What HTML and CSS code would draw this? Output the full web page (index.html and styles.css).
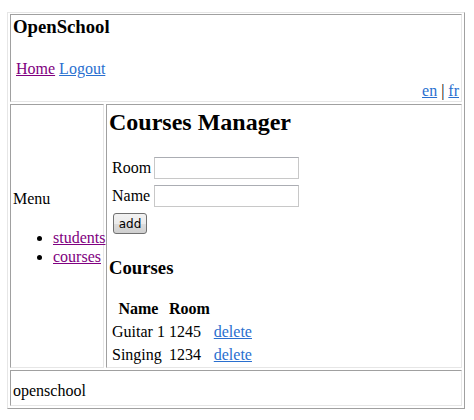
FILE: index.html
```html
<!DOCTYPE html>
<html>
<head>
<meta charset="utf-8">
<title>OpenSchool</title>
<link rel="stylesheet" href="styles.css">
</head>
<body>
<div class="frame">
  <div class="cell header">
    <h3 class="brand">OpenSchool</h3>
    <div class="nav"><a href="#" class="visited">Home</a> <a href="#">Logout</a></div>
    <div class="lang"><a href="#">en</a> | <a href="#">fr</a></div>
  </div>
  <div class="cell menu">
    <div class="menu-inner">
      <div>Menu</div>
      <ul class="menu-list">
        <li><a href="#" class="visited">students</a></li>
        <li><a href="#" class="visited">courses</a></li>
      </ul>
    </div>
  </div>
  <div class="cell main">
    <h2 class="title">Courses Manager</h2>
    <form class="course-form">
      <label class="lbl">Room</label><input class="field" type="text">
      <label class="lbl">Name</label><input class="field" type="text">
      <button type="button" class="btn">add</button>
    </form>
    <h3 class="subtitle">Courses</h3>
    <table class="courses">
      <tr><th>Name</th><th>Room</th><th></th></tr>
      <tr><td>Guitar 1</td><td>1245</td><td class="act"><a href="#">delete</a></td></tr>
      <tr><td>Singing</td><td>1234</td><td class="act"><a href="#">delete</a></td></tr>
    </table>
  </div>
  <div class="cell footer">openschool</div>
</div>
</body>
</html>
```
FILE: styles.css
```css
html, body {
  background: #ffffff;
}
body {
  margin: 12px 9px 0 7px;
  font-family: "Liberation Serif", "Times New Roman", serif;
  font-size: 16px;
  color: #000;
}
a {
  color: #2a6fcf;
  text-decoration: underline;
}
a.visited {
  color: #800080;
}
.frame {
  box-sizing: border-box;
  width: 458px;
  display: grid;
  grid-template-columns: 94px 1fr;
  gap: 2px;
  padding: 1px 2px 2px 2px;
  border: 1px solid;
  border-color: #e6e6e6 #a0a0a0 #a0a0a0 #e6e6e6;
}
.cell {
  border: 1px solid;
  border-color: #a0a0a0 #e6e6e6 #e6e6e6 #a0a0a0;
  padding: 1px 1px 1px 2px;
}
.header {
  grid-column: 1 / 3;
  height: 84px;
  display: flex;
  flex-direction: column;
}
.brand {
  margin: 0;
  font-size: 18.72px;
  font-weight: bold;
  line-height: 22px;
}
.nav {
  margin-top: 22px;
  padding-left: 3px;
  line-height: 18px;
}
.lang {
  margin-top: auto;
  text-align: right;
  line-height: 18px;
  padding-right: 1px;
}
.menu {
  display: flex;
  align-items: center;
}
.menu-inner {
  width: 100%;
}
.menu-list {
  margin: 20px 0 16px 0;
  padding-left: 40px;
  line-height: 19px;
}
.main {
  padding: 1px 1px 0 2px;
}
.title {
  margin: 2px 0 0 0;
  font-size: 24px;
  line-height: 28px;
}
.course-form {
  margin: 21px 0 0 3px;
  display: grid;
  grid-template-columns: 42px 145px;
  row-gap: 6px;
  align-items: center;
}
.lbl {
  line-height: 18px;
}
.field {
  box-sizing: border-box;
  width: 145px;
  height: 22px;
  margin: 0;
  border: 1px solid #c8c8c8;
  border-top-color: #abadb3;
  background: #fff;
}
.btn {
  grid-column: 1 / 3;
  justify-self: start;
  box-sizing: border-box;
  width: 34px;
  height: 21px;
  margin: 0 0 0 1px;
  padding: 0;
  font-family: "DejaVu Sans", "Liberation Sans", sans-serif;
  font-size: 12px;
  color: #000;
  border: 1px solid #707070;
  border-radius: 3px;
  background: linear-gradient(#f2f2f2, #ebebeb 50%, #dddddd 51%, #cfcfcf);
}
.subtitle {
  margin: 23px 0 0 0;
  font-size: 18.72px;
  line-height: 22px;
}
.courses {
  margin-top: 17px;
  border-spacing: 2px;
  font-size: 16px;
}
.courses th, .courses td {
  padding: 1px;
  line-height: 19px;
}
.courses th {
  font-weight: bold;
  text-align: center;
}
.courses td.act {
  padding-left: 1px;
}
.footer {
  grid-column: 1 / 3;
  box-sizing: border-box;
  height: 36px;
  display: flex;
  align-items: center;
  padding: 5px 1px 0 2px;
}
```
